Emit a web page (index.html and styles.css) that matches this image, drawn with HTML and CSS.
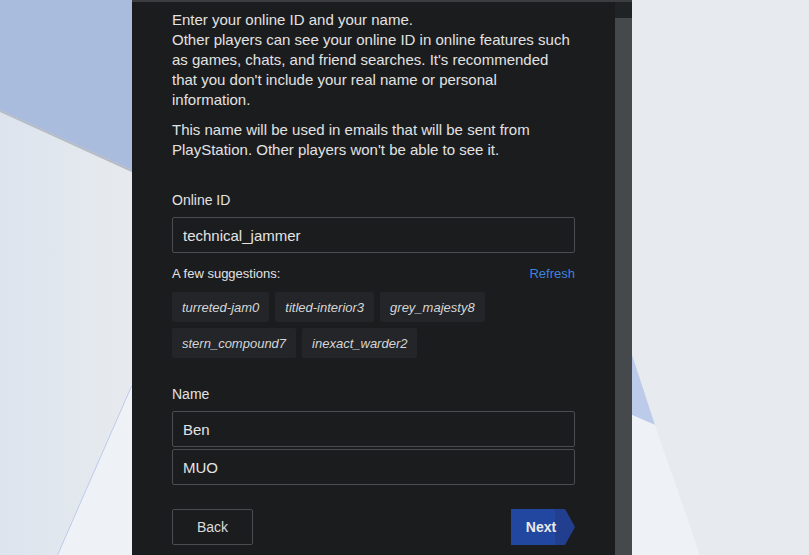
FILE: index.html
```html
<!DOCTYPE html>
<html lang="en">
<head>
    <meta charset="UTF-8">
    <meta name="viewport" content="width=device-width, initial-scale=1.0">
    <title>Create Account</title>
    <link rel="stylesheet" href="styles.css">
</head>
<body>
    <svg class="backdrop" viewBox="0 0 809 555" preserveAspectRatio="none">
        <defs>
            <linearGradient id="wash" x1="0" y1="0" x2="1" y2="0">
                <stop offset="0" stop-color="#dde4ee"/>
                <stop offset="0.15" stop-color="#e6eaee"/>
                <stop offset="1" stop-color="#e7ebef"/>
            </linearGradient>
        </defs>
        <rect width="809" height="555" fill="url(#wash)"/>
        <!-- blue sheet, top left -->
        <polygon points="0,0 132,0 132,170 0,110" fill="#a9bcdd"/>
        <line x1="0" y1="111" x2="132" y2="171" stroke="#b5bcc6" stroke-width="2"/>
        <!-- thin streak, bottom left -->
        <line x1="132" y1="386" x2="58" y2="555" stroke="#b4c4ea" stroke-width="1.5"/>
        <polygon points="132,386 58,555 132,555" fill="#eef1f5"/>
        <!-- blue sliver, right -->
        <polygon points="632,355 655,425 632,415" fill="#bccbea"/>
        <polygon points="655,425 700,555 632,555 632,415" fill="#eef1f5"/>
    </svg>

    <main class="panel">
        <div class="scroll-area">
            <p class="intro">Enter your online ID and your name.<br>Other players can see your online ID in online features such as games, chats, and friend searches. It's recommended that you don't include your real name or personal information.</p>
            <p class="intro">This name will be used in emails that will be sent from PlayStation. Other players won't be able to see it.</p>

            <section class="field">
                <label for="online-id">Online ID</label>
                <input type="text" id="online-id" value="technical_jammer">
            </section>

            <div class="suggest-head">
                <span>A few suggestions:</span>
                <a href="#" class="refresh">Refresh</a>
            </div>
            <div class="chips">
                <button class="chip">turreted-jam0</button>
                <button class="chip">titled-interior3</button>
                <button class="chip">grey_majesty8</button>
                <button class="chip">stern_compound7</button>
                <button class="chip">inexact_warder2</button>
            </div>

            <section class="field name-field">
                <label for="first-name">Name</label>
                <input type="text" id="first-name" value="Ben">
                <input type="text" id="last-name" value="MUO">
            </section>

            <div class="actions">
                <button class="btn-back">Back</button>
                <button class="btn-next">Next</button>
            </div>
        </div>
        <div class="scrollbar"><div class="thumb"></div></div>
    </main>
</body>
</html>
```

FILE: styles.css
```css
html, body { margin: 0; padding: 0; height: 100%; overflow: hidden; }
body { font-family: "Liberation Sans", Arial, sans-serif; color: #e2e2e2; position: relative; background: #e6eaee; }
.backdrop { position: absolute; left: 0; top: 0; width: 809px; height: 555px; }

.panel { position: relative; margin-left: 132px; width: 500px; height: 555px; background: #1b1c1e; border-top: 2px solid #3b3d40; box-sizing: border-box; display: flex; }
.scroll-area { flex: 1; padding: 8px 40px 0 40px; }
.scrollbar { width: 17px; display: flex; flex-direction: column; background: #202325; }
.scrollbar .thumb { margin-top: 16px; flex: 1; background: #45494c; }

.intro { margin: 0 0 10px; font-size: 15px; line-height: 20px; }

.field { display: flex; flex-direction: column; }
.field label { font-size: 14px; line-height: 20px; margin-top: 20px; margin-bottom: 7px; }
.field input { height: 36px; box-sizing: border-box; background: #1b1c1e; border: 1px solid #4a4c4f; border-radius: 2px; color: #e4e4e4; font-family: inherit; font-size: 15px; padding: 0 10px; margin-bottom: 2px; outline: none; }
.name-field label { margin-top: 26px; }

.suggest-head { display: flex; justify-content: space-between; font-size: 13px; line-height: 16px; margin-top: 11px; }
.refresh { color: #3f82dc; text-decoration: none; }

.chips { display: flex; flex-wrap: wrap; gap: 6px; margin-top: 10px; }
.chip { height: 30px; padding: 0 10px; background: #232528; border: none; border-radius: 2px; color: #d6d6d6; font-family: inherit; font-style: italic; font-size: 13px; }

.actions { display: flex; justify-content: space-between; margin-top: 22px; }
.btn-back { width: 81px; height: 36px; background: transparent; border: 1px solid #4a4c4f; border-radius: 2px; color: #dcdcdc; font-family: inherit; font-size: 14px; }
.btn-next { width: 64px; height: 36px; border: none; color: #eaeaea; font-family: inherit; font-weight: bold; font-size: 14px; padding: 0 4px 0 0;
    background: linear-gradient(90deg, #2247a0 0, #2247a0 44px, #223f8f 44px);
    clip-path: polygon(0 0, 54px 0, 100% 50%, 54px 100%, 0 100%); }
```
